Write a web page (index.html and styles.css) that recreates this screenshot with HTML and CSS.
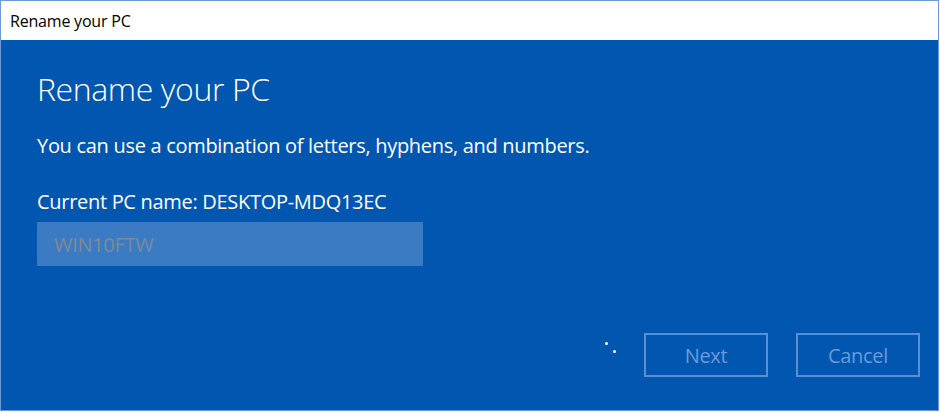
FILE: index.html
```html
<!DOCTYPE html>
<html lang="en">
<head>
<meta charset="utf-8">
<title>Rename your PC</title>
<link rel="stylesheet" href="styles.css">
</head>
<body>
<div class="window">
  <div class="titlebar"><span class="title">Rename your PC</span></div>
  <div class="content">
    <h1 class="heading">Rename your PC</h1>
    <p class="desc">You can use a combination of letters, hyphens, and numbers.</p>
    <p class="current">Current PC name: DESKTOP-MDQ13EC</p>
    <div class="field"><span class="placeholder">WIN10FTW</span></div>
    <div class="footer">
      <div class="spinner"><span class="dot d1"></span><span class="dot d2"></span></div>
      <div class="btn">Next</div>
      <div class="btn">Cancel</div>
    </div>
  </div>
</div>
</body>
</html>
```
FILE: styles.css
```css
html, body {
  margin: 0;
  padding: 0;
  background: #ffffff;
}
body {
  width: 940px;
  height: 412px;
  overflow: hidden;
  font-family: "Open Sans", "Noto Sans", sans-serif;
}
.window {
  box-sizing: border-box;
  width: 939px;
  height: 411px;
  border: 1px solid #6b9ad8;
  display: flex;
  flex-direction: column;
}
.titlebar {
  height: 39px;
  background: #ffffff;
  display: flex;
  align-items: center;
  padding-left: 9px;
  flex: none;
}
.title {
  font-size: 16px;
  color: #000000;
  letter-spacing: -0.2px;
}
.content {
  flex: 1;
  background: #0157b0;
  padding: 0 18px 0 36px;
  display: flex;
  flex-direction: column;
  color: #ffffff;
}
.heading {
  margin: 29px 0 0 0;
  font-weight: 300;
  font-size: 32px;
  line-height: 40px;
  letter-spacing: -0.4px;
}
.desc {
  margin: 23px 0 0 0;
  font-size: 20px;
  line-height: 28px;
  letter-spacing: -0.3px;
}
.current {
  margin: 28px 0 0 0;
  font-size: 20px;
  line-height: 28px;
  letter-spacing: -0.3px;
}
.field {
  margin-top: 6px;
  width: 386px;
  height: 44px;
  background: #3a7bc4;
  display: flex;
  align-items: center;
  padding-left: 17px;
  box-sizing: border-box;
}
.placeholder {
  color: #7e8a98;
  font-size: 20px;
  letter-spacing: -0.3px;
}
.footer {
  margin-top: 67px;
  display: flex;
  justify-content: flex-end;
  align-items: flex-start;
  gap: 28px;
}
.spinner {
  position: relative;
  width: 11px;
  height: 11px;
  margin-top: 9px;
}
.dot {
  position: absolute;
  width: 3px;
  height: 3px;
  border-radius: 50%;
  background: #ffffff;
}
.d1 { left: 0; top: 0; }
.d2 { left: 8px; top: 8px; }
.btn {
  box-sizing: border-box;
  width: 124px;
  height: 44px;
  border: 2px solid #5a8fd4;
  color: #6a9ad9;
  font-size: 20px;
  display: flex;
  align-items: center;
  justify-content: center;
  letter-spacing: -0.3px;
}
```
